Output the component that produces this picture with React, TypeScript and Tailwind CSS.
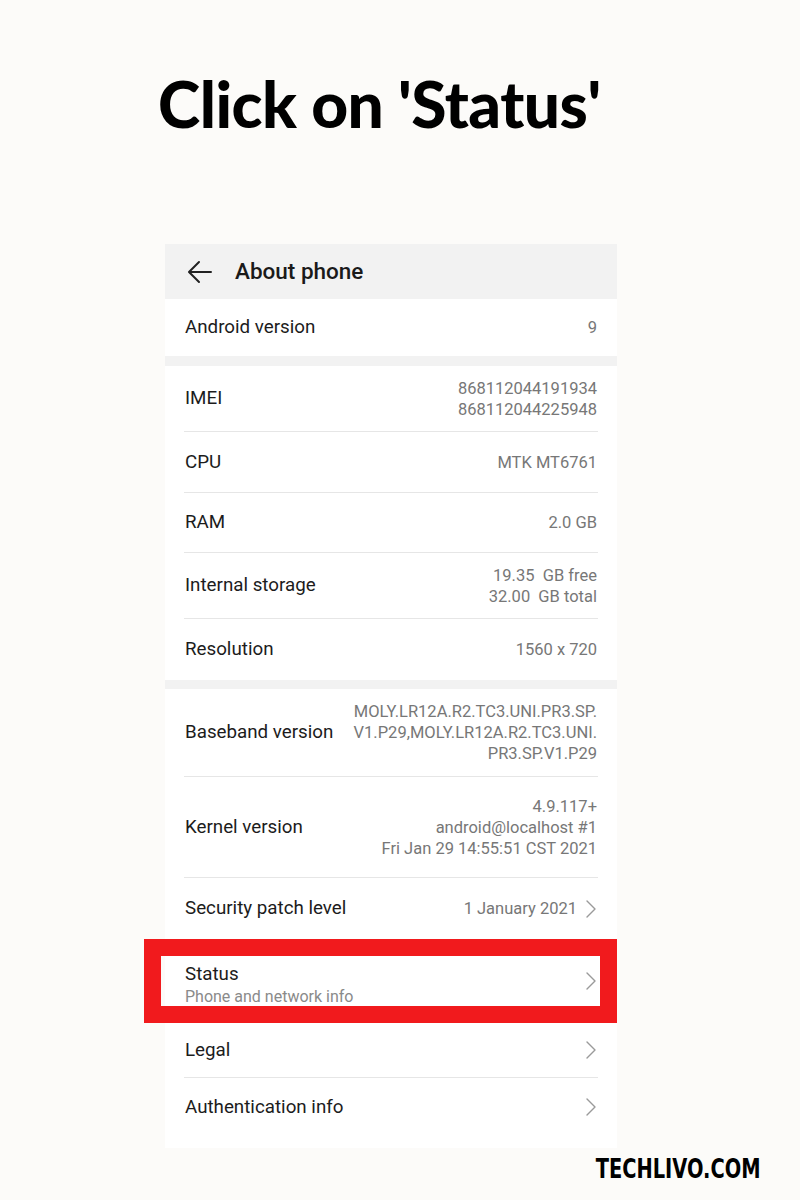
import React from "react";

const Chevron = () => (
  <svg width="12" height="20" viewBox="0 0 12 20" fill="none" className="shrink-0">
    <path d="M2 2 L10 10 L2 18" stroke="#9a9a9a" strokeWidth="1.4" strokeLinecap="round" strokeLinejoin="round" />
  </svg>
);

const Divider = () => <div className="mx-[19px] h-px bg-[#e6e6e6]" />;

function Row({
  label,
  values,
  h,
  chevron,
}: {
  label: string;
  values?: string[];
  h: string;
  chevron?: boolean;
}) {
  return (
    <div className={`flex items-center justify-between pl-[20px] pr-[20px] ${h}`}>
      <span className="text-[18.75px] text-[#1c1c1c] whitespace-nowrap">{label}</span>
      <div className="flex items-center gap-[8px]">
        {values && (
          <div className="text-right text-[16.5px] leading-[21px] text-[#777777]">
            {values.map((v, i) => (
              <div key={i} className="whitespace-pre">{v}</div>
            ))}
          </div>
        )}
        {chevron && <Chevron />}
      </div>
    </div>
  );
}

export default function App() {
  return (
    <div
      className="min-h-[1200px] w-[800px] bg-[#fcfbf9] overflow-hidden"
      style={{ fontFamily: "Roboto, 'Noto Sans', sans-serif" }}
    >
      <h1
        className="pt-[66px] pl-[158px] text-[64px] leading-[76px] font-black text-black tracking-[-0.5px]"
        style={{ fontFamily: "Lato, 'DejaVu Sans', sans-serif" }}
      >
        Click on 'Status'
      </h1>

      <div className="mt-[102px] ml-[165px] w-[452px] bg-white">
        {/* header */}
        <div className="flex h-[55px] items-center bg-[#f2f2f2] pl-[22px]">
          <svg width="26" height="24" viewBox="0 0 26 24" fill="none">
            <path d="M24 12 H2.5 M12 2 L2 12 L12 22" stroke="#222" strokeWidth="2" strokeLinecap="round" strokeLinejoin="round" />
          </svg>
          <span className="ml-[22px] text-[22.5px] font-medium text-[#1a1a1a]">About phone</span>
        </div>

        <Row label="Android version" values={["9"]} h="h-[57px]" />
        <div className="h-[10px] bg-[#f2f2f2]" />

        <Row label="IMEI" values={["868112044191934", "868112044225948"]} h="h-[65px]" />
        <Divider />
        <Row label="CPU" values={["MTK MT6761"]} h="h-[60px]" />
        <Divider />
        <Row label="RAM" values={["2.0 GB"]} h="h-[59px]" />
        <Divider />
        <Row label="Internal storage" values={["19.35  GB free", "32.00  GB total"]} h="h-[65px]" />
        <Divider />
        <Row label="Resolution" values={["1560 x 720"]} h="h-[61px]" />
        <div className="h-[9px] bg-[#f2f2f2]" />

        <Row
          label="Baseband version"
          values={["MOLY.LR12A.R2.TC3.UNI.PR3.SP.", "V1.P29,MOLY.LR12A.R2.TC3.UNI.", "PR3.SP.V1.P29"]}
          h="h-[87px]"
        />
        <Divider />
        <Row
          label="Kernel version"
          values={["4.9.117+", "android@localhost #1", "Fri Jan 29 14:55:51 CST 2021"]}
          h="h-[100px]"
        />
        <Divider />
        <Row label="Security patch level" values={["1 January 2021"]} h="h-[61px]" chevron />

        {/* Status row with red highlight */}
        <div className="relative flex h-[84px] items-center justify-between pl-[20px] pr-[20px]">
          <div className="flex flex-col pt-[8px]">
            <span className="text-[18.75px] leading-[24px] text-[#1c1c1c]">Status</span>
            <span className="text-[16px] leading-[22px] text-[#8a8a8a]">Phone and network info</span>
          </div>
          <Chevron />
          <div className="pointer-events-none absolute -left-[21px] right-0 top-0 bottom-0 border-[17px] border-[#f11a1d]" />
        </div>

        <Row label="Legal" h="h-[54px]" chevron />
        <Divider />
        <Row label="Authentication info" h="h-[58px]" chevron />
        <div className="h-[12px]" />
      </div>

      <div className="flex justify-end pr-[40px] pt-[6px]">
        <span
          className="inline-block origin-right scale-x-[0.83] text-[26px] leading-[30px] font-bold text-black"
          style={{ fontFamily: "'DejaVu Sans Condensed', 'DejaVu Sans', sans-serif" }}
        >
          TECHLIVO.COM
        </span>
      </div>
    </div>
  );
}
